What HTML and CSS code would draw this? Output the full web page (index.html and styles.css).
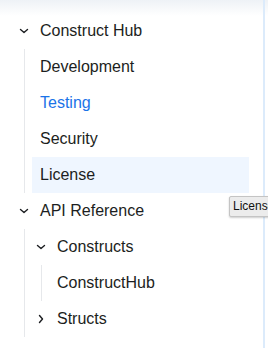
FILE: index.html
```
<!DOCTYPE html>
<html>
<head>
  <link rel="stylesheet" href="styles.css">
</head>
<body>
  <div class="sidebar">
    <ul class="tree">
      <li class="group">
        <div class="row folder">
          <svg class="chevron" viewBox="0 0 16 16"><path d="M4.5 6.5 L8 9.5 L11.5 6.5"/></svg>
          <span>Construct Hub</span>
        </div>
        <ul class="tree">
          <li class="row leaf">Development</li>
          <li class="row leaf current">Testing</li>
          <li class="row leaf">Security</li>
          <li class="row leaf hover">License</li>
        </ul>
      </li>
      <li class="group">
        <div class="row folder">
          <svg class="chevron" viewBox="0 0 16 16"><path d="M4.5 6.5 L8 9.5 L11.5 6.5"/></svg>
          <span>API Reference</span>
        </div>
        <ul class="tree">
          <li class="group">
            <div class="row folder">
              <svg class="chevron" viewBox="0 0 16 16"><path d="M4.5 6.5 L8 9.5 L11.5 6.5"/></svg>
              <span>Constructs</span>
            </div>
            <ul class="tree">
              <li class="row leaf">ConstructHub</li>
            </ul>
          </li>
          <li class="group">
            <div class="row folder">
              <svg class="chevron" viewBox="0 0 16 16"><path d="M6.5 4.5 L9.5 8 L6.5 11.5"/></svg>
              <span>Structs</span>
            </div>
          </li>
        </ul>
      </li>
    </ul>
  </div>
  <div class="tooltip">License</div>
</body>
</html>
```

FILE: styles.css
```
body {
  margin: 0;
  width: 268px;
  height: 348px;
  overflow: hidden;
  position: relative;
  font-family: 'Liberation Sans', Arial, sans-serif;
  color: #1c1e21;
  background: linear-gradient(#eef2f6, #ffffff 16px) no-repeat, #ffffff;
}
.sidebar {
  width: 265px;
  height: 348px;
  box-sizing: border-box;
  border-right: 2px solid #dcebfb;
  padding-top: 13px;
  padding-right: 14px;
}
.tree {
  list-style: none;
  margin: 0;
  padding: 0 0 0 16px;
}
.tree .tree {
  margin-left: 8px;
  padding-left: 7px;
  border-left: 1px solid #e6e8eb;
}
.tree .tree .group {
  padding-left: 1px;
}
.tree .tree .group .tree {
  margin-left: 8px;
}
.row {
  height: 36px;
  display: flex;
  align-items: center;
  font-size: 16px;
}
.leaf {
  padding: 0 8px;
}
.folder {
  gap: 8px;
}
.chevron {
  width: 16px;
  height: 16px;
  fill: none;
  stroke: #1c1e21;
  stroke-width: 1.4;
  stroke-linecap: round;
  stroke-linejoin: round;
}
.current {
  color: #1a73e8;
}
.hover {
  background-color: #eff6ff;
}
.tooltip {
  position: absolute;
  left: 229px;
  top: 196px;
  padding: 2px 3px 2px 3px;
  font-size: 12px;
  line-height: 15px;
  color: #111;
  background-color: #ececec;
  border: 1px solid #c4c4c4;
  border-radius: 2px;
  box-shadow: 0 1px 2px rgba(0, 0, 0, 0.2);
  white-space: nowrap;
}
```
